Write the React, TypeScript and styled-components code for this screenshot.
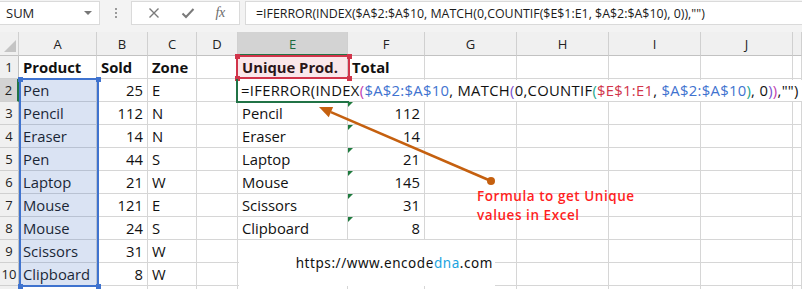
import React from 'react';
import styled, { createGlobalStyle, css } from 'styled-components';

const GlobalStyle = createGlobalStyle`
  html, body { margin: 0; padding: 0; background: #fff; overflow: hidden; }
  body { font-family: "Open Sans", "Noto Sans", sans-serif; }
`;

const COLS = [19, 78, 51, 49, 41, 110, 77, 92, 92, 92, 92, 9];
const LETTERS = ['', 'A', 'B', 'C', 'D', 'E', 'F', 'G', 'H', 'I', 'J', ''];

const Page = styled.div`
  width: 802px;
  height: 289px;
  overflow: hidden;
  background: #fff;
`;

/* ---------- formula bar ---------- */
const FormulaBar = styled.div`
  display: flex;
  align-items: flex-start;
  height: 32px;
  box-sizing: border-box;
  padding-top: 1px;
  background: #f3f3f3;
`;

const NameBox = styled.div`
  width: 100px;
  height: 24px;
  box-sizing: border-box;
  background: #fff;
  border: 1px solid #dadada;
  border-left: none;
  display: flex;
  align-items: center;
  justify-content: space-between;
  padding: 0 6px 0 6px;
  font-family: "Open Sans", sans-serif;
  font-size: 13px;
  color: #222;
`;

const DropTriangle = styled.span`
  width: 0;
  height: 0;
  border-left: 4px solid transparent;
  border-right: 4px solid transparent;
  border-top: 4px solid #777;
  margin-right: 1px;
`;

const Grip = styled.div`
  width: 31px;
  height: 24px;
  display: flex;
  flex-direction: column;
  align-items: center;
  justify-content: center;
  gap: 2px;
`;

const GripDot = styled.span`
  width: 2px;
  height: 2px;
  background: #9a9a9a;
`;

const ButtonBox = styled.div`
  width: 109px;
  height: 24px;
  box-sizing: border-box;
  background: #fff;
  border: 1px solid #dadada;
  display: flex;
  align-items: center;
  justify-content: space-around;
  padding: 0 4px 0 6px;
`;

const FxGlyph = styled.span`
  font-family: "Liberation Serif", serif;
  font-style: italic;
  font-size: 14px;
  color: #6b6b6b;
  letter-spacing: -0.5px;
`;

const FormulaInput = styled.div`
  flex: 1;
  margin-left: 5px;
  height: 24px;
  box-sizing: border-box;
  background: #fff;
  border: 1px solid #dadada;
  border-right: none;
  display: flex;
  align-items: center;
  padding-left: 10px;
  font-family: "Open Sans", sans-serif;
  font-size: 12.4px;
  color: #1a1a1a;
  white-space: nowrap;
  overflow: hidden;
`;

/* ---------- grid ---------- */
const GridWrap = styled.div`
  position: relative;
`;

const Grid = styled.div`
  display: grid;
  grid-template-columns: ${COLS.map((c) => c + 'px').join(' ')};
  grid-template-rows: 24px repeat(11, 23px);
`;

const HeadCell = styled.div<{ $active?: boolean }>`
  box-sizing: border-box;
  background: ${(p) => (p.$active ? '#d3d3d3' : '#f0f0f0')};
  border-right: 1px solid #d0d0d0;
  border-bottom: ${(p) => (p.$active ? '2px solid #217346' : '1px solid #c2c2c2')};
  display: flex;
  align-items: center;
  justify-content: center;
  font-family: "Open Sans", sans-serif;
  font-size: 13px;
  color: ${(p) => (p.$active ? '#1d6a3f' : '#222')};
  padding-top: 1px;
`;

const Corner = styled.div`
  box-sizing: border-box;
  background: #f0f0f0;
  border-right: 1px solid #d0d0d0;
  border-bottom: 1px solid #c2c2c2;
  display: flex;
  align-items: flex-end;
  justify-content: flex-end;
  padding: 0 2px 3px 0;
`;

const CornerTriangle = styled.span`
  width: 0;
  height: 0;
  border-left: 12px solid transparent;
  border-bottom: 12px solid #c4c4c4;
`;

const RowHead = styled.div<{ $active?: boolean }>`
  box-sizing: border-box;
  background: ${(p) => (p.$active ? '#d3d3d3' : '#f0f0f0')};
  border-right: ${(p) => (p.$active ? '2px solid #217346' : '1px solid #c2c2c2')};
  border-bottom: 1px solid #d0d0d0;
  display: flex;
  align-items: center;
  justify-content: center;
  font-family: "Open Sans", sans-serif;
  font-size: 13px;
  color: #222;
`;

const Cell = styled.div<{ $num?: boolean; $bold?: boolean; $flag?: boolean }>`
  position: relative;
  box-sizing: border-box;
  border-right: 1px solid #d6d6d6;
  border-bottom: 1px solid #d6d6d6;
  padding: 0 ${(p) => (p.$num ? '4px' : '3px')} 0 4px;
  text-align: ${(p) => (p.$num ? 'right' : 'left')};
  font-family: "Open Sans", sans-serif;
  font-size: 14.8px;
  line-height: 22px;
  font-weight: ${(p) => (p.$bold ? 700 : 400)};
  color: #111;
  white-space: nowrap;
  ${(p) =>
    p.$flag &&
    css`
      &::before {
        content: '';
        position: absolute;
        left: 0;
        top: 0;
        border-top: 5px solid #1e7b3e;
        border-right: 5px solid transparent;
      }
    `}
`;

const EditText = styled.span`
  position: relative;
  z-index: 3;
  display: inline-block;
  background: #fff;
  padding-right: 3px;
  margin-left: -1px;
  line-height: 21px;
  letter-spacing: 0.3px;
`;

const Ref = styled.span<{ $c: string }>`
  color: ${(p) => p.$c};
`;

/* ---------- overlays ---------- */
const RangeBox = styled.div<{ $color: string; $fill: string }>`
  position: absolute;
  box-sizing: border-box;
  border: 2px solid ${(p) => p.$color};
  background: ${(p) => p.$fill};
  pointer-events: none;
  z-index: 4;
`;

const Handle = styled.span<{ $color: string; $x: 'l' | 'r'; $y: 't' | 'b' }>`
  position: absolute;
  width: 5px;
  height: 5px;
  background: ${(p) => p.$color};
  ${(p) => (p.$x === 'l' ? 'left: -3.5px;' : 'right: -3.5px;')}
  ${(p) => (p.$y === 't' ? 'top: -3.5px;' : 'bottom: -3.5px;')}
`;

const ActiveEdge = styled.div`
  position: absolute;
  box-sizing: border-box;
  border-left: 2px solid #217346;
  border-bottom: 2px solid #217346;
  z-index: 5;
  pointer-events: none;
`;

const ArrowLayer = styled.svg`
  position: absolute;
  left: 0;
  top: 0;
  z-index: 6;
  pointer-events: none;
`;

const Note = styled.div`
  position: absolute;
  z-index: 6;
  font-family: "Open Sans", sans-serif;
  font-weight: 600;
  font-size: 13.5px;
  line-height: 19px;
  color: #ff1f1f;
  letter-spacing: 0.55px;
`;

const UrlBox = styled.div`
  position: absolute;
  z-index: 6;
  background: #fff;
  display: flex;
  align-items: center;
  justify-content: flex-end;
  padding-right: 2px;
  box-sizing: border-box;
  font-family: "Noto Sans", sans-serif;
  font-size: 13.5px;
  letter-spacing: 0.57px;
  color: #111;
`;

const Dna = styled.span`
  color: #1aa3e0;
`;

type Val = string | number;
const DATA: Val[][] = [
  ['Product', 'Sold', 'Zone', '', 'Unique Prod.', 'Total'],
  ['Pen', 25, 'E', '', '', ''],
  ['Pencil', 112, 'N', '', 'Pencil', 112],
  ['Eraser', 14, 'N', '', 'Eraser', 14],
  ['Pen', 44, 'S', '', 'Laptop', 21],
  ['Laptop', 21, 'W', '', 'Mouse', 145],
  ['Mouse', 121, 'E', '', 'Scissors', 31],
  ['Mouse', 24, 'S', '', 'Clipboard', 8],
  ['Scissors', 31, 'W', '', '', ''],
  ['Clipboard', 8, 'W', '', '', ''],
  ['', '', '', '', '', ''],
];

const BLUE = '#3f73cf';
const RED = '#d1344a';
const PINK = '#c23bb0';
const PURPLE = '#7a4fd0';
const TEAL = '#1aa58a';

const FormulaSegments: React.FC<{ colored: boolean }> = ({ colored }) => {
  if (!colored) {
    return <>=IFERROR(INDEX($A$2:$A$10, MATCH(0,COUNTIF($E$1:E1, $A$2:$A$10), 0)),"")</>;
  }
  return (
    <>
      =IFERROR(INDEX<Ref $c={PINK}>(</Ref>
      <Ref $c={BLUE}>$A$2:$A$10</Ref>, MATCH<Ref $c={PURPLE}>(</Ref>0,COUNTIF
      <Ref $c={TEAL}>(</Ref>
      <Ref $c={RED}>$E$1:E1</Ref>, <Ref $c={BLUE}>$A$2:$A$10</Ref>
      <Ref $c={TEAL}>)</Ref>, 0<Ref $c={PURPLE}>)</Ref>
      <Ref $c={PINK}>)</Ref>,"")
    </>
  );
};

export default function App() {
  const cells: React.ReactNode[] = [];
  LETTERS.forEach((l, i) => {
    if (i === 0) {
      cells.push(
        <Corner key="corner">
          <CornerTriangle />
        </Corner>
      );
    } else {
      cells.push(
        <HeadCell key={'h' + i} $active={l === 'E'}>
          {l}
        </HeadCell>
      );
    }
  });
  DATA.forEach((row, r) => {
    const rowNum = r + 1;
    cells.push(
      <RowHead key={'r' + r} $active={rowNum === 2}>
        {rowNum <= 10 ? rowNum : ''}
      </RowHead>
    );
    for (let c = 0; c < 11; c++) {
      const v = c < row.length ? row[c] : '';
      const isNum = typeof v === 'number';
      const bold = rowNum === 1;
      const flag = c === 5 && rowNum >= 3 && rowNum <= 8;
      let content: React.ReactNode = v;
      if (c === 4 && rowNum === 2) {
        content = (
          <EditText>
            <FormulaSegments colored />
          </EditText>
        );
      }
      cells.push(
        <Cell key={r + '-' + c} $num={isNum} $bold={bold} $flag={flag}>
          {content}
        </Cell>
      );
    }
  });

  const tip = { x: 319, y: 75 };
  const tail = { x: 491, y: 149 };
  const dx = tip.x - tail.x;
  const dy = tip.y - tail.y;
  const len = Math.sqrt(dx * dx + dy * dy);
  const ux = dx / len;
  const uy = dy / len;
  const hl = 13;
  const hw = 5.5;
  const bx = tip.x - ux * hl;
  const by = tip.y - uy * hl;
  const px = -uy;
  const py = ux;
  const head = `${tip.x},${tip.y} ${bx + px * hw},${by + py * hw} ${bx - px * hw},${by - py * hw}`;

  return (
    <Page>
      <GlobalStyle />
      <FormulaBar>
        <NameBox>
          SUM
          <DropTriangle />
        </NameBox>
        <Grip>
          <GripDot />
          <GripDot />
          <GripDot />
        </Grip>
        <ButtonBox>
          <svg width="12" height="12" viewBox="0 0 12 12">
            <path d="M1.5 1.5 L10.5 10.5 M10.5 1.5 L1.5 10.5" stroke="#7a7a7a" strokeWidth="1.4" fill="none" />
          </svg>
          <svg width="14" height="12" viewBox="0 0 14 12">
            <path d="M1.5 6.5 L5 10 L12.5 2" stroke="#7a7a7a" strokeWidth="2" fill="none" />
          </svg>
          <FxGlyph>fx</FxGlyph>
        </ButtonBox>
        <FormulaInput>
          <FormulaSegments colored={false} />
        </FormulaInput>
      </FormulaBar>

      <GridWrap>
        <Grid>{cells}</Grid>

        <RangeBox $color={BLUE} $fill="rgba(68,114,196,0.2)" style={{ left: 19, top: 46, width: 80, height: 209 }}>
          <Handle $color={BLUE} $x="l" $y="t" />
          <Handle $color={BLUE} $x="r" $y="t" />
          <Handle $color={BLUE} $x="l" $y="b" />
          <Handle $color={BLUE} $x="r" $y="b" />
        </RangeBox>

        <RangeBox $color={RED} $fill="rgba(214,60,80,0.12)" style={{ left: 236, top: 23, width: 114, height: 24 }}>
          <Handle $color={RED} $x="l" $y="t" />
          <Handle $color={RED} $x="r" $y="t" />
          <Handle $color={RED} $x="l" $y="b" />
          <Handle $color={RED} $x="r" $y="b" />
        </RangeBox>

        <ActiveEdge style={{ left: 236, top: 47, width: 113, height: 24 }} />

        <ArrowLayer width="802" height="257" viewBox="0 0 802 257">
          <line x1={bx} y1={by} x2={tail.x} y2={tail.y} stroke="#c5600f" strokeWidth="2.6" />
          <polygon points={head} fill="#c5600f" />
          <circle cx={tail.x} cy={tail.y} r="4" fill="#c5600f" />
        </ArrowLayer>

        <Note style={{ left: 477, top: 155 }}>
          Formula to get Unique
          <br />
          values in Excel
        </Note>

        <UrlBox style={{ left: 239, top: 208, width: 256, height: 46 }}>
          https://www.encode<Dna>dna</Dna>.com
        </UrlBox>
      </GridWrap>
    </Page>
  );
}
